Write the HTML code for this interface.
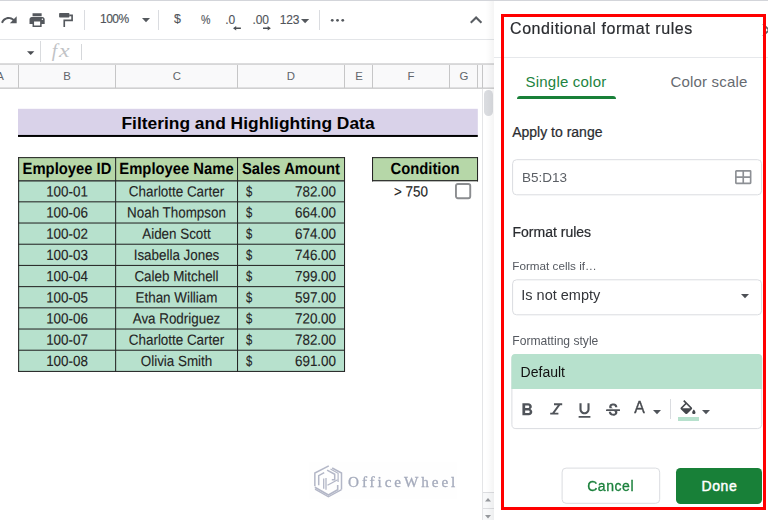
<!DOCTYPE html>
<html>
<head>
<meta charset="utf-8">
<title>Conditional format rules</title>
<style>
*{box-sizing:border-box;margin:0;padding:0}
html,body{width:768px;height:520px;overflow:hidden;background:#fff}
body{position:relative;font-family:"Liberation Sans",sans-serif;color:#202124}
.abs{position:absolute}
.t{position:absolute;white-space:nowrap;line-height:1}
svg{position:absolute;overflow:visible}
/* top chrome */
#topline{left:0;top:0;width:768px;height:1px;background:#d3d5da}
#toolbar{left:0;top:1px;width:494px;height:39px;background:#fff;border-bottom:1px solid #e3e5e8}
.vsep{position:absolute;width:1px;background:#dadce0}
.tb{position:absolute;white-space:nowrap;line-height:1;font-size:12px;color:#50545a;-webkit-text-stroke:0.12px #50545a}
/* column header */
#colhdr{left:0;top:63px;width:494px;height:26px;background:#f9f9fa;border-top:1px solid #dcdcdd;border-bottom:1px solid #d0d0d1}
#colhdr:before{content:"";position:absolute;left:0;top:0;width:494px;height:1px;background:#d7d7d8}
#colhdr:after{content:"";position:absolute;left:0;bottom:0;width:494px;height:1px;background:#e0e0e1}
.cdiv{position:absolute;top:65px;width:1px;height:23px;background:#c6c6c7}
.cl{position:absolute;top:69px;transform:translateY(0.600px) rotate(0.020deg);width:20px;margin-left:-10px;font-size:11.4px;color:#62666b;text-align:center;line-height:12px}
/* sheet */
.c{position:absolute;font-size:13.4px;color:#1c1c1c;line-height:20px;height:20px;white-space:nowrap}
.d{transform-origin:50% 50%;color:#242424;-webkit-text-stroke:0.12px #242424}
.hb{font-weight:bold;font-size:14.8px;color:#000;line-height:22px;height:22px;transform:translateY(-0.4px) scaleY(1.1) rotate(0.03deg);transform-origin:50% 50%}
/* panel */
#pshadow{left:486px;top:1px;width:8px;height:519px;background:linear-gradient(to right,rgba(0,0,0,0),rgba(0,0,0,0.045))}
#panel{left:494px;top:1px;width:274px;height:519px;background:#fff}
.pl{position:absolute;white-space:nowrap;line-height:1}
.box{position:absolute;border:1px solid #dadce0;border-radius:4px;background:#fff}
</style>
</head>
<body>
<div class="abs" id="toolbar"></div>
<div class="abs" id="topline"></div>

<!-- toolbar icons -->
<svg style="left:0.3px;top:10.9px" width="18.2" height="18.2" viewBox="0 0 24 24"><path fill="#54585d" d="M18.4 10.6C16.55 8.99 14.15 8 11.5 8c-4.65 0-8.58 3.03-9.96 7.22L3.9 16c1.05-3.19 4.05-5.5 7.6-5.5 1.95 0 3.730.72 5.12 1.88L13 16h9V7l-3.6 3.6z"/></svg>
<svg style="left:28px;top:10.95px" width="18.2" height="18.2" viewBox="0 0 24 24"><path fill="#54585d" d="M19 8H5c-1.66 0-3 1.34-3 3v6h4v4h12v-4h4v-6c0-1.660-1.34-3-3-3zm-3 11H8v-5h8v5zm3-7c-.55 0-1-.45-1-1s.45-1 1-1 1 .45 1 1-.45 1-1 1zm-1-9H6v4h12V3z"/></svg>
<svg style="left:59px;top:13px" width="15" height="15" viewBox="0 0 15 15"><rect x="0.1" y="0" width="10.3" height="4.600" rx="0.800" fill="#54585d"/><path d="M10.300 2.300H13.100V7.300H5.250V14.100" fill="none" stroke="#54585d" stroke-width="1.650"/></svg>
<div class="vsep" style="left:84px;top:10px;height:20px"></div>
<div class="tb" style="left:100px;top:12.7px;letter-spacing:-0.5px;-webkit-text-stroke:0.15px #50545a">100%</div>
<svg style="left:142px;top:18px" width="8" height="4.2" viewBox="0 0 8 4.2"><path fill="#54585d" d="M0 0h8L4 4.2z"/></svg>
<div class="vsep" style="left:158px;top:10px;height:20px"></div>
<div class="tb" style="left:174px;top:13px;font-size:12.400px;transform:scaleY(1.100) rotate(0.020deg);transform-origin:50% 50%">$</div>
<div class="tb" style="left:201px;top:13.2px;font-size:12.800px;transform:translateY(0.700px) scaleX(0.830);transform-origin:0 0">%</div>
<div class="tb" style="left:225.3px;top:13.8px;letter-spacing:-0.2px">.0</div>
<svg style="left:233.2px;top:25.9px" width="7.900" height="4.600" viewBox="0 0 7.900 4.600"><path fill="#4a4e53" d="M7.900 1.550H3.200V0L0 2.300 3.200 4.600V3.050H7.900z"/></svg>
<div class="tb" style="left:252.6px;top:13.8px;letter-spacing:-0.2px">.00</div>
<svg style="left:263.1px;top:25.9px" width="7.900" height="4.600" viewBox="0 0 7.900 4.600"><path fill="#4a4e53" d="M0 1.550H4.700V0L7.900 2.300 4.700 4.600V3.050H0z"/></svg>
<div class="tb" style="left:279.7px;top:13.5px;letter-spacing:-0.2px">123</div>
<svg style="left:301px;top:18.7px" width="8.2" height="4.3" viewBox="0 0 8 4.2"><path fill="#54585d" d="M0 0h8L4 4.2z"/></svg>
<div class="vsep" style="left:319px;top:10px;height:20px"></div>
<svg style="left:330px;top:18px" width="15" height="5" viewBox="0 0 15 5"><circle cx="2.25" cy="2.3" r="1.400" fill="#54585d"/><circle cx="7.5" cy="2.3" r="1.400" fill="#54585d"/><circle cx="12.75" cy="2.3" r="1.400" fill="#54585d"/></svg>
<svg style="left:463.5px;top:7.9px" width="24.2" height="24.2" viewBox="0 0 24 24"><path fill="#5a5e63" d="M12 8l-6 6 1.410 1.410L12 10.830l4.590 4.580L18 14z"/></svg>

<!-- formula bar -->
<svg style="left:26.5px;top:51.2px" width="7.4" height="4.2" viewBox="0 0 8 4.2"><path fill="#4a4d52" d="M0 0h8L4 4.2z"/></svg>
<div class="vsep" style="left:40px;top:41px;height:21px;background:#d9dbde"></div>
<div class="t" style="left:51.8px;top:40.6px;font-family:'Liberation Serif',serif;font-style:italic;font-size:19.500px;color:#c1c3c6">f</div>
<div class="t" style="left:59.3px;top:40.6px;font-family:'Liberation Serif',serif;font-style:italic;font-size:19.500px;color:#c1c3c6;transform:scaleX(1.220);transform-origin:0 0">x</div>
<div class="vsep" style="left:81px;top:43.5px;height:16.5px;background:#d5d7da"></div>

<!-- column header -->
<div class="abs" id="colhdr"></div>
<div class="cdiv" style="left:18px"></div>
<div class="cdiv" style="left:115px"></div>
<div class="cdiv" style="left:237px"></div>
<div class="cdiv" style="left:344px"></div>
<div class="cdiv" style="left:372px"></div>
<div class="cdiv" style="left:449px"></div>
<div class="cdiv" style="left:477px"></div>
<div class="cdiv" style="left:482px"></div>
<div class="cl" style="left:0px">A</div>
<div class="cl" style="left:67.2px">B</div>
<div class="cl" style="left:176.5px">C</div>
<div class="cl" style="left:291px">D</div>
<div class="cl" style="left:358.5px">E</div>
<div class="cl" style="left:411px">F</div>
<div class="cl" style="left:463.5px">G</div>

<!-- scrollbar -->
<div class="abs" style="left:482px;top:89px;width:1px;height:431px;background:#e4e5e7"></div>
<div class="abs" style="left:484px;top:90px;width:9px;height:25.5px;border-radius:4.5px;background:#dadce0"></div>
<div class="abs" style="left:483px;top:492px;width:11px;height:28px;background:#f8f9fa;border-top:1px solid #dcdde0"></div>
<div class="abs" style="left:483px;top:508px;width:11px;height:1px;background:#dcdde0"></div>
<svg style="left:485.4px;top:497.7px" width="6" height="3.4" viewBox="0 0 6 3.4"><path fill="#96999d" d="M0 3.400h6L3 0z"/></svg>
<svg style="left:485.4px;top:514.8px" width="6" height="3.4" viewBox="0 0 6 3.4"><path fill="#96999d" d="M0 0h6L3 3.400z"/></svg>

<!-- SHEET -->
<svg style="left:0;top:0" width="494" height="520" viewBox="0 0 494 520">
<rect x="18" y="108.8" width="459.8" height="26.4" fill="#d9d2e9"/>
<rect x="18" y="134.95" width="459.8" height="2.0" fill="#000"/>
<rect x="18.2" y="157.0" width="326.6" height="23.10" fill="#b6d7a8"/>
<rect x="18.2" y="180.10" width="326.6" height="191.80" fill="#b7e1cd"/>
<rect x="372.2" y="157.0" width="105.6" height="24.10" fill="#b6d7a8"/>
<rect x="18.1" y="157.10" width="326.90" height="1.05" fill="#262626"/>
<rect x="18.1" y="180.20" width="326.90" height="1.3" fill="#262626"/>
<rect x="18.1" y="201.30" width="326.90" height="1.05" fill="#262626"/>
<rect x="18.1" y="222.50" width="326.90" height="1.05" fill="#262626"/>
<rect x="18.1" y="243.70" width="326.90" height="1.05" fill="#262626"/>
<rect x="18.1" y="264.90" width="326.90" height="1.05" fill="#262626"/>
<rect x="18.1" y="286.10" width="326.90" height="1.05" fill="#262626"/>
<rect x="18.1" y="307.30" width="326.90" height="1.05" fill="#262626"/>
<rect x="18.1" y="328.50" width="326.90" height="1.05" fill="#262626"/>
<rect x="18.1" y="349.70" width="326.90" height="1.05" fill="#262626"/>
<rect x="18.1" y="370.90" width="326.90" height="1.05" fill="#262626"/>
<rect x="18.1" y="157.10" width="1.05" height="214.80" fill="#262626"/>
<rect x="115.1" y="157.10" width="1.05" height="214.80" fill="#262626"/>
<rect x="237.0" y="157.10" width="1.05" height="214.80" fill="#262626"/>
<rect x="344.0" y="157.10" width="1.05" height="214.80" fill="#262626"/>
<rect x="372.0" y="157.10" width="106.00" height="1.05" fill="#262626"/>
<rect x="372.0" y="180.10" width="106.00" height="1.2" fill="#262626"/>
<rect x="372.0" y="157.10" width="1.05" height="24.30" fill="#262626"/>
<rect x="477.0" y="157.10" width="1.05" height="24.30" fill="#262626"/>
</svg>
<div class="c hb" style="left:19px;width:96px;top:157.00px;text-align:center;transform:translateY(0.60px) scaleY(1.1) rotate(0.03deg);">Employee ID</div>
<div class="c hb" style="left:116px;width:121px;top:157.00px;text-align:center;transform:translateY(0.60px) scaleY(1.1) rotate(0.03deg);">Employee Name</div>
<div class="c hb" style="left:238px;width:106px;top:157.00px;text-align:center;transform:translateY(0.60px) scaleY(1.1) rotate(0.03deg);">Sales Amount</div>
<div class="c hb" style="left:373px;width:104px;top:157.00px;text-align:center;transform:translateY(0.60px) scaleY(1.1) rotate(0.03deg);">Condition</div>
<div class="c d" style="left:19px;width:96px;top:182.00px;text-align:center;transform:translateY(0.00px) scaleY(1.1) rotate(0.03deg);">100-01</div>
<div class="c d" style="left:116px;width:121px;top:182.00px;text-align:center;transform:translateY(0.00px) scaleY(1.1) rotate(0.03deg);">Charlotte Carter</div>
<div class="c d" style="left:245.7px;width:20px;top:182.00px;text-align:left;transform-origin:0 50%;transform:translateY(0.00px) scaleY(1.1) scaleX(0.84) rotate(0.03deg);">$</div>
<div class="c d" style="left:238px;width:98.0px;top:182.00px;text-align:right;transform:translateY(0.00px) scaleY(1.1) rotate(0.03deg);">782.00</div>
<div class="c d" style="left:19px;width:96px;top:203.00px;text-align:center;transform:translateY(0.20px) scaleY(1.1) rotate(0.03deg);">100-06</div>
<div class="c d" style="left:116px;width:121px;top:203.00px;text-align:center;transform:translateY(0.20px) scaleY(1.1) rotate(0.03deg);">Noah Thompson</div>
<div class="c d" style="left:245.7px;width:20px;top:203.00px;text-align:left;transform-origin:0 50%;transform:translateY(0.20px) scaleY(1.1) scaleX(0.84) rotate(0.03deg);">$</div>
<div class="c d" style="left:238px;width:98.0px;top:203.00px;text-align:right;transform:translateY(0.20px) scaleY(1.1) rotate(0.03deg);">664.00</div>
<div class="c d" style="left:19px;width:96px;top:224.00px;text-align:center;transform:translateY(0.40px) scaleY(1.1) rotate(0.03deg);">100-02</div>
<div class="c d" style="left:116px;width:121px;top:224.00px;text-align:center;transform:translateY(0.40px) scaleY(1.1) rotate(0.03deg);">Aiden Scott</div>
<div class="c d" style="left:245.7px;width:20px;top:224.00px;text-align:left;transform-origin:0 50%;transform:translateY(0.40px) scaleY(1.1) scaleX(0.84) rotate(0.03deg);">$</div>
<div class="c d" style="left:238px;width:98.0px;top:224.00px;text-align:right;transform:translateY(0.40px) scaleY(1.1) rotate(0.03deg);">674.00</div>
<div class="c d" style="left:19px;width:96px;top:245.00px;text-align:center;transform:translateY(0.60px) scaleY(1.1) rotate(0.03deg);">100-03</div>
<div class="c d" style="left:116px;width:121px;top:245.00px;text-align:center;transform:translateY(0.60px) scaleY(1.1) rotate(0.03deg);">Isabella Jones</div>
<div class="c d" style="left:245.7px;width:20px;top:245.00px;text-align:left;transform-origin:0 50%;transform:translateY(0.60px) scaleY(1.1) scaleX(0.84) rotate(0.03deg);">$</div>
<div class="c d" style="left:238px;width:98.0px;top:245.00px;text-align:right;transform:translateY(0.60px) scaleY(1.1) rotate(0.03deg);">746.00</div>
<div class="c d" style="left:19px;width:96px;top:266.00px;text-align:center;transform:translateY(0.80px) scaleY(1.1) rotate(0.03deg);">100-04</div>
<div class="c d" style="left:116px;width:121px;top:266.00px;text-align:center;transform:translateY(0.80px) scaleY(1.1) rotate(0.03deg);">Caleb Mitchell</div>
<div class="c d" style="left:245.7px;width:20px;top:266.00px;text-align:left;transform-origin:0 50%;transform:translateY(0.80px) scaleY(1.1) scaleX(0.84) rotate(0.03deg);">$</div>
<div class="c d" style="left:238px;width:98.0px;top:266.00px;text-align:right;transform:translateY(0.80px) scaleY(1.1) rotate(0.03deg);">799.00</div>
<div class="c d" style="left:19px;width:96px;top:288.00px;text-align:center;transform:translateY(0.00px) scaleY(1.1) rotate(0.03deg);">100-05</div>
<div class="c d" style="left:116px;width:121px;top:288.00px;text-align:center;transform:translateY(0.00px) scaleY(1.1) rotate(0.03deg);">Ethan William</div>
<div class="c d" style="left:245.7px;width:20px;top:288.00px;text-align:left;transform-origin:0 50%;transform:translateY(0.00px) scaleY(1.1) scaleX(0.84) rotate(0.03deg);">$</div>
<div class="c d" style="left:238px;width:98.0px;top:288.00px;text-align:right;transform:translateY(0.00px) scaleY(1.1) rotate(0.03deg);">597.00</div>
<div class="c d" style="left:19px;width:96px;top:309.00px;text-align:center;transform:translateY(0.20px) scaleY(1.1) rotate(0.03deg);">100-06</div>
<div class="c d" style="left:116px;width:121px;top:309.00px;text-align:center;transform:translateY(0.20px) scaleY(1.1) rotate(0.03deg);">Ava Rodriguez</div>
<div class="c d" style="left:245.7px;width:20px;top:309.00px;text-align:left;transform-origin:0 50%;transform:translateY(0.20px) scaleY(1.1) scaleX(0.84) rotate(0.03deg);">$</div>
<div class="c d" style="left:238px;width:98.0px;top:309.00px;text-align:right;transform:translateY(0.20px) scaleY(1.1) rotate(0.03deg);">720.00</div>
<div class="c d" style="left:19px;width:96px;top:330.00px;text-align:center;transform:translateY(0.40px) scaleY(1.1) rotate(0.03deg);">100-07</div>
<div class="c d" style="left:116px;width:121px;top:330.00px;text-align:center;transform:translateY(0.40px) scaleY(1.1) rotate(0.03deg);">Charlotte Carter</div>
<div class="c d" style="left:245.7px;width:20px;top:330.00px;text-align:left;transform-origin:0 50%;transform:translateY(0.40px) scaleY(1.1) scaleX(0.84) rotate(0.03deg);">$</div>
<div class="c d" style="left:238px;width:98.0px;top:330.00px;text-align:right;transform:translateY(0.40px) scaleY(1.1) rotate(0.03deg);">782.00</div>
<div class="c d" style="left:19px;width:96px;top:351.00px;text-align:center;transform:translateY(0.60px) scaleY(1.1) rotate(0.03deg);">100-08</div>
<div class="c d" style="left:116px;width:121px;top:351.00px;text-align:center;transform:translateY(0.60px) scaleY(1.1) rotate(0.03deg);">Olivia Smith</div>
<div class="c d" style="left:245.7px;width:20px;top:351.00px;text-align:left;transform-origin:0 50%;transform:translateY(0.60px) scaleY(1.1) scaleX(0.84) rotate(0.03deg);">$</div>
<div class="c d" style="left:238px;width:98.0px;top:351.00px;text-align:right;transform:translateY(0.60px) scaleY(1.1) rotate(0.03deg);">691.00</div>
<div class="c d" style="left:373px;width:76px;top:182.00px;text-align:center;transform:translateY(0.00px) scaleY(1.1) rotate(0.03deg);">&gt; 750</div>
<div class="c" style="left:18px;width:460px;top:110.9px;text-align:center;font-weight:bold;font-size:17.4px;color:#000;line-height:24px;height:24px">Filtering and Highlighting Data</div>
<svg style="left:455px;top:183.2px" width="16.200" height="16.200" viewBox="0 0 16.200 16.200"><rect x="0.950" y="0.950" width="14.300" height="14.300" rx="1.900" fill="#fff" stroke="#8b8d90" stroke-width="1.900"/></svg>

<!-- watermark -->
<div class="abs" style="left:309px;top:462px;width:148px;height:37px;background:#fefefe"></div>
<svg style="left:314px;top:465.4px" width="29" height="33" viewBox="0 0 29 33" fill="none" stroke="#b3b7c7" stroke-width="1.500" stroke-linejoin="miter">
<path d="M0.850 21.200V8L14.800 0.850"/>
<path d="M18.200 3L27.500 8V24.600"/>
<path d="M1 24.100L14.400 31.750 27.500 24.600" stroke-width="1.300"/>
<path d="M0.850 22.200L14.400 30 23.700 24.800V19.900" stroke-width="1.600"/>
<path d="M4.700 20.300V10.600L10.200 7.600"/>
<path d="M13.100 5.100L20.700 9.300V14.800H17.800"/>
<path d="M16.500 3.900L24.100 8.300V17" stroke-width="1.200"/>
<path d="M9.700 23.700V13.500M12 24.800V13" stroke-width="1.300"/>
<path d="M13.500 20.300L23.700 14.800" stroke-width="1.300"/>
</svg>
<div class="t" style="left:348px;top:473.5px;font-family:'Liberation Serif',serif;font-size:15.2px;color:#a4aabb;letter-spacing:2.920px;-webkit-text-stroke:0.3px #a4aabb;will-change:transform">OfficeWheel</div>

<!-- PANEL -->
<div class="abs" id="pshadow"></div>
<div class="abs" id="panel"></div>
<div class="pl" style="left:510.3px;top:21px;font-size:16px;letter-spacing:0.58px;color:#2a2c30;-webkit-text-stroke:0.2px #2a2c30;will-change:transform;transform:translateY(0.2px)">Conditional format rules</div>
<div class="abs" style="left:494px;top:57px;width:274px;height:1px;background:#e6e8eb"></div>
<svg style="left:763px;top:24px" width="12" height="12" viewBox="0 0 12 12"><path d="M0 0L12 12M12 0L0 12" stroke="#5f6368" stroke-width="1.600"/></svg>
<div class="pl" style="left:525.6px;top:74.1px;font-size:15px;letter-spacing:0.2px;color:#1d8340">Single color</div>
<div class="abs" style="left:517px;top:95.6px;width:99px;height:3px;background:#188038;border-radius:3px 3px 0 0"></div>
<div class="pl" style="left:670.5px;top:74.1px;font-size:15px;letter-spacing:0.18px;color:#666a70">Color scale</div>

<div class="pl" style="left:512.2px;top:124.6px;font-size:14px;color:#2a2c30;-webkit-text-stroke:0.22px #2a2c30">Apply to range</div>
<svg style="left:0;top:0" width="768" height="520"><rect x="512.600" y="159.700" width="249" height="35.100" rx="4" fill="#fff" stroke="#dadce0"/></svg>
<div class="pl" style="left:522px;top:171.1px;font-size:13.5px;color:#5b5f65">B5:D13</div>
<svg style="left:734.5px;top:170.2px" width="16.500" height="14.200" viewBox="0 0 16.500 14.200" fill="none" stroke="#8d9095" stroke-width="1.650"><rect x="0.850" y="0.850" width="14.800" height="12.500" rx="0.500"/><path d="M8.250 0.850V13.350M0.850 7.100H15.650"/></svg>

<div class="pl" style="left:512.5px;top:225.1px;font-size:14px;color:#2a2c30;-webkit-text-stroke:0.22px #2a2c30">Format rules</div>
<div class="pl" style="left:512.3px;top:259.9px;font-size:11.700px;color:#555960">Format cells if&hellip;</div>
<svg style="left:0;top:0" width="768" height="520"><rect x="512.600" y="279.800" width="249" height="35" rx="4" fill="#fff" stroke="#dadce0"/></svg>
<div class="pl" style="left:521.3px;top:288px;font-size:14.500px;color:#33353a">Is not empty</div>
<svg style="left:741px;top:294.3px" width="8" height="4.2" viewBox="0 0 8 4.2"><path fill="#4d5055" d="M0 0h8L4 4.2z"/></svg>

<div class="pl" style="left:512.3px;top:334.5px;font-size:12.100px;color:#555960">Formatting style</div>
<svg style="left:0;top:0" width="768" height="520"><rect x="511.900" y="354.600" width="249.800" height="74" rx="4" fill="#fff" stroke="#dadce0"/></svg>
<svg style="left:0;top:0" width="768" height="520"><path d="M511.400 389V358.100a4 4 0 0 1 4-4H758.200a4 4 0 0 1 4 4V389z" fill="#b7e1cd"/></svg>
<div class="pl" style="left:520.6px;top:364.7px;font-size:14px;color:#111">Default</div>

<!-- style icons -->
<svg style="left:516.4px;top:399.8px" width="22" height="20.200" viewBox="0 0 24 24" preserveAspectRatio="none"><path fill="#50545a" d="M15.600 10.790c.97-.67 1.650-1.770 1.650-2.790 0-2.260-1.750-4-4-4H7v14h7.040c2.090 0 3.710-1.700 3.710-3.790 0-1.520-.86-2.820-2.150-3.420zM10 6.500h3c.83 0 1.500.67 1.500 1.500s-.67 1.500-1.500 1.500h-3v-3zm3.500 9H10v-3h3.500c.83 0 1.500.67 1.500 1.500s-.67 1.500-1.500 1.500z"/></svg>
<svg style="left:550px;top:403px" width="13" height="12" viewBox="0 0 13 12"><path fill="#50545a" d="M4 0.300H12.200V2.150H10.150L4.650 9.700H8.400V11.550H0.200V9.700H2.250L7.750 2.150H4z"/></svg>
<svg style="left:574px;top:400.3px" width="20.200" height="20.200" viewBox="-0.500 0 24 24"><path fill="#50545a" d="M12 17c3.310 0 6-2.690 6-6V3.900h-2.500v7.100c0 1.930-1.570 3.500-3.500 3.500S8.500 12.930 8.500 11V3.900H6v7.100c0 3.310 2.690 6 6 6zm-7 1.900v2.100h14v-2.100H5z"/></svg>
<svg style="left:603.7px;top:401.200px" width="18.200" height="19.600" viewBox="0 0 24 24" preserveAspectRatio="none"><path fill="#50545a" d="M7.240 8.750c-.26-.48-.39-1.030-.39-1.670 0-.61.130-1.160.4-1.670.26-.5.630-.93 1.110-1.290.48-.35 1.050-.63 1.700-.83.660-.19 1.390-.29 2.180-.29.810 0 1.540.11 2.210.34.660.22 1.230.54 1.690.94.470.4.830.88 1.080 1.430.25.550.38 1.150.38 1.810h-3.010c0-.31-.05-.59-.15-.85-.09-.27-.24-.49-.44-.68-.2-.19-.45-.33-.75-.44-.3-.1-.66-.16-1.060-.16-.39 0-.74.04-1.030.13-.29.090-.53.210-.72.360-.19.160-.34.340-.44.550-.1.210-.15.430-.15.660 0 .48.250.88.740 1.210.38.250.77.480 1.410.7H7.390c-.05-.08-.11-.17-.15-.25zM21 12v-2H3v2h9.620c.18.070.4.140.55.200.37.170.66.340.87.510.21.170.35.360.43.570.07.200.11.430.11.690 0 .23-.05.450-.14.660-.09.200-.23.380-.42.530-.19.150-.42.260-.71.350-.29.080-.63.130-1.010.13-.43 0-.83-.04-1.180-.13s-.66-.23-.91-.42c-.25-.19-.45-.44-.59-.75-.14-.31-.25-.76-.25-1.210H6.400c0 .55.080 1.130.24 1.580.16.450.37.850.65 1.210.28.350.6.660.98.920.37.260.78.480 1.220.65.440.17.900.3 1.380.39.480.08.960.13 1.440.13.800 0 1.530-.09 2.180-.28s1.210-.45 1.670-.79c.46-.34.820-.77 1.070-1.270s.38-1.070.38-1.710c0-.6-.1-1.140-.31-1.610-.05-.11-.11-.23-.17-.33H21z"/></svg>
<div class="abs" style="left:605.800px;top:409.600px;width:14.100px;height:1.900px;background:#50545a"></div>
<div class="pl" style="left:634.2px;top:399.5px;font-size:15.800px;color:#474a4f;-webkit-text-stroke:0.35px #474a4f">A</div>
<svg style="left:653px;top:409.8px" width="8" height="4.2" viewBox="0 0 8 4.2"><path fill="#50545a" d="M0 0h8L4 4.2z"/></svg>
<div class="vsep" style="left:670px;top:399px;height:20px"></div>
<svg style="left:678.2px;top:400.3px" width="20" height="16.600" viewBox="0 0 24 20" preserveAspectRatio="none"><path fill="#44474c" d="M16.560 8.940L7.620 0 6.210 1.410l2.380 2.380-5.150 5.150c-.59.590-.59 1.540 0 2.120l5.500 5.500c.29.290.68.440 1.060.44s.77-.15 1.060-.44l5.500-5.500c.59-.58.590-1.530 0-2.120zM5.210 10L10 5.210 14.790 10H5.210zM19 11.500s-2 2.170-2 3.500c0 1.100.9 2 2 2s2-.9 2-2c0-1.330-2-3.500-2-3.500z"/></svg>
<div class="abs" style="left:678px;top:417px;width:21.300px;height:3.700px;background:#b7e1cd"></div>
<svg style="left:701.5px;top:409.8px" width="8" height="4.2" viewBox="0 0 8 4.2"><path fill="#50545a" d="M0 0h8L4 4.2z"/></svg>

<!-- buttons -->
<svg style="left:0;top:0" width="768" height="520"><rect x="562.100" y="468.100" width="97.600" height="35.200" rx="4" fill="#fff" stroke="#dadce0"/></svg>
<div class="pl" style="left:587.2px;top:478.5px;font-size:14px;letter-spacing:0.55px;color:#1b813c;-webkit-text-stroke:0.3px #1b813c">Cancel</div>
<div class="abs" style="left:676px;top:467.5px;width:86px;height:36.500px;background:#188038;border-radius:4.500px"></div>
<div class="pl" style="left:701.6px;top:478.7px;font-size:14px;letter-spacing:0.55px;color:#fff;-webkit-text-stroke:0.45px #fff">Done</div>

<div class="abs" id="redbox" style="left:501px;top:14px;width:265px;height:496px;border:3px solid #ff0000"></div>
</body>
</html>
